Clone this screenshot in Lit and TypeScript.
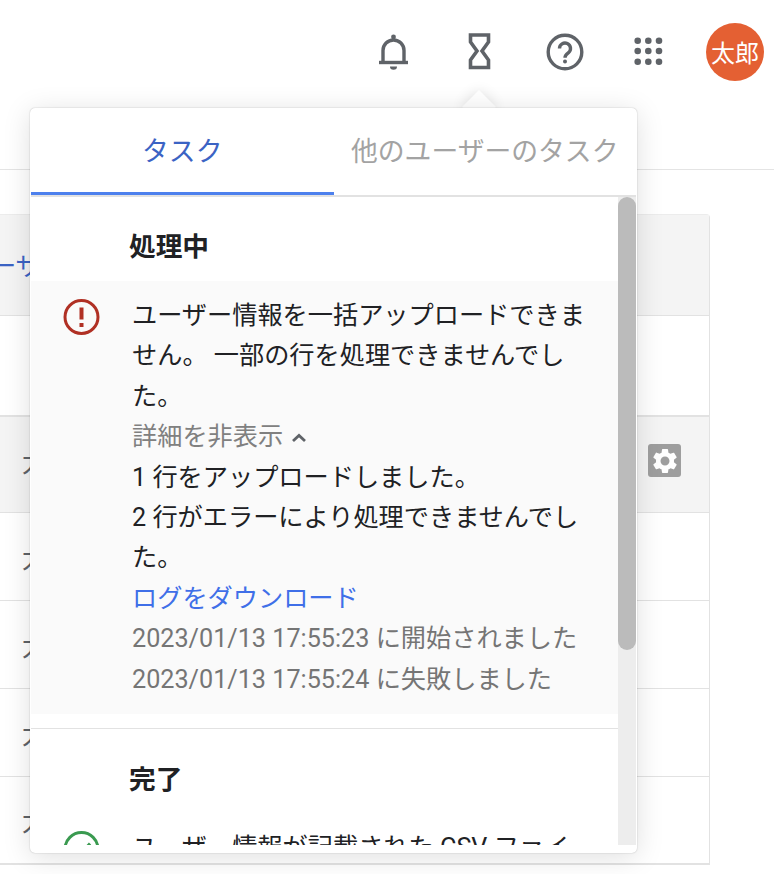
import { LitElement, html, css } from "lit";
import { customElement } from "lit/decorators.js";

const gear = "M19.14 12.94c.04-.3.06-.61.06-.94 0-.32-.02-.64-.07-.94l2.03-1.58c.18-.14.23-.41.12-.61l-1.92-3.32c-.12-.22-.37-.29-.59-.22l-2.39.96c-.5-.38-1.03-.7-1.62-.94l-.36-2.54c-.04-.24-.24-.41-.48-.41h-3.84c-.24 0-.43.17-.47.41l-.36 2.54c-.59.24-1.13.57-1.62.94l-2.39-.96c-.22-.08-.47 0-.59.22L2.74 8.87c-.12.21-.08.47.12.61l2.03 1.58c-.05.3-.09.63-.09.94s.02.64.07.94l-2.03 1.58c-.18.14-.23.41-.12.61l1.92 3.32c.12.22.37.29.59.22l2.39-.96c.5.38 1.03.7 1.62.94l.36 2.54c.05.24.24.41.48.41h3.84c.24 0 .44-.17.47-.41l.36-2.54c.59-.24 1.13-.56 1.62-.94l2.39.96c.22.08.47 0 .59-.22l1.92-3.32c.12-.22.07-.47-.12-.61l-2.01-1.58zM12 15.6c-1.98 0-3.6-1.62-3.6-3.6s1.62-3.6 3.6-3.6 3.6 1.62 3.6 3.6-1.62 3.6-3.6 3.6z";

@customElement("app-root")
export class AppRoot extends LitElement {
  static styles = css`
    :host {
      display: block;
      position: relative;
      width: 774px;
      height: 874px;
      overflow: hidden;
      background: #fff;
      font-family: Roboto, "Noto Sans CJK JP", sans-serif;
      font-size: 25.2px;
      color: #202124;
    }
    .header {
      display: flex;
      align-items: center;
      box-sizing: border-box;
      height: 170px;
      padding: 23px 10px 89px 0;
      justify-content: flex-end;
      border-bottom: 1px solid #e4e4e4;
    }
    .ico {
      width: 85px;
      display: flex;
      justify-content: center;
    }
    .ico svg { display: block; width: 44px; height: 44px; }
    .avatar {
      width: 58px;
      height: 58px;
      margin-left: 15px;
      border-radius: 50%;
      background: #e46033;
      color: #fff;
      font-size: 24px;
      display: flex;
      align-items: center;
      justify-content: center;
      white-space: nowrap;
    }
    .table {
      margin-top: 44px;
      width: 710px;
      box-sizing: border-box;
      border-right: 1px solid #e2e2e2;
      border-top: 1px solid #ececec;
      border-top-right-radius: 4px;
      color: #5f6368;
    }
    .row {
      box-sizing: border-box;
      display: flex;
      align-items: center;
      justify-content: space-between;
      padding-left: 22px;
      border-bottom: 1px solid #e2e2e2;
      height: 88px;
      white-space: nowrap;
    }
    .row.gray { background: #f4f4f4; }
    .row.head { height: 101px; padding-left: 0; color: #3b63c4; padding-bottom: 2px; }
    .row.head span { margin-left: -9px; }
    .row.blank { height: 101px; border-bottom-width: 2px; }
    .row.tall { height: 96px; padding-bottom: 8px; padding-right: 28px; }
    .row.last { border-bottom-width: 2px; }
    .gearbox {
      width: 33px;
      height: 33px;
      border-radius: 3px;
      background: #9e9e9e;
      display: flex;
      align-items: center;
      justify-content: center;
    }
    .gearbox svg { width: 30px; height: 30px; fill: #fff; }
    .arrow {
      position: absolute;
      left: 467px;
      top: 95px;
      width: 24px;
      height: 24px;
      background: #fff;
      transform: rotate(45deg);
      box-shadow: 0 0 14px rgba(0, 0, 0, 0.12);
    }
    .popup {
      position: absolute;
      left: 30px;
      top: 108px;
      width: 607px;
      height: 745px;
      box-sizing: border-box;
      background: #fff;
      border-radius: 5px;
      padding: 1px 1px 8px 1px;
      display: flex;
      flex-direction: column;
      box-shadow: 0 0 1.5px rgba(0, 0, 0, 0.28), 0 4px 28px rgba(0, 0, 0, 0.13);
    }
    .tabs {
      display: flex;
      box-sizing: border-box;
      height: 88px;
      flex: none;
      border-bottom: 2px solid #e2e2e2;
    }
    .tab {
      box-sizing: border-box;
      flex: 1;
      height: 86px;
      padding-bottom: 6px;
      font-size: 26.8px;
      display: flex;
      align-items: center;
      justify-content: center;
      color: #a3a3a3;
      white-space: nowrap;
    }
    .tab.active {
      color: #3b63c4;
      border-bottom: 3px solid #4d80ed;
      padding-bottom: 3px;
    }
    .scroll {
      flex: 1;
      min-height: 0;
      display: flex;
      overflow: hidden;
    }
    .content {
      flex: 1;
      min-width: 0;
      overflow: hidden;
    }
    .track {
      flex: none;
      width: 18px;
      background: #ededed;
    }
    .thumb {
      height: 453px;
      background: #bbbbbb;
      border-radius: 9px;
    }
    h2 {
      margin: 0;
      padding: 34px 0 17px 98px;
      font-size: 26.7px;
      line-height: 33px;
      font-weight: 700;
      color: #202124;
    }
    .sep + h2 { padding: 35px 0 16px 98px; }
    .item {
      display: flex;
      gap: 31px;
      padding: 15px 0 14px 32px;
      line-height: 40.4px;
    }
    .item.err { background: #fafafa; }
    .item svg.state { flex: none; width: 38px; height: 38px; margin-top: 2px; }
    .body { width: 456px; }
    .muted { color: #757575; }
    .link { color: #3f6fe8; }
    .toggle { display: flex; align-items: center; gap: 8px; color: #808080; }
    .toggle svg { width: 16px; height: 10px; margin-top: 2px; }
    .sep { border-top: 1px solid #e2e2e2; margin-top: 14px; }
  `;

  render() {
    return html`
      <div class="header">
        <div class="ico">
          <svg viewBox="0 0 44 44" fill="none" stroke="#5f6368" stroke-width="3.4">
            <circle cx="21.5" cy="7" r="2.4" fill="#5f6368" stroke="none"></circle>
            <path d="M11 32V20.5a10.5 10.5 0 0 1 21 0V32"></path>
            <path d="M7 32.5H36"></path>
            <path d="M18 36.5h7a3.5 3.2 0 0 1-7 0z" fill="#5f6368" stroke="none"></path>
          </svg>
        </div>
        <div class="ico">
          <svg viewBox="0 0 44 44" fill="none" stroke="#5f6368" stroke-width="3.6">
            <path d="M13.5 5H31.5V12L25 21L31.5 30V37.5H13.5V30L20 21L13.5 12Z"></path>
          </svg>
        </div>
        <div class="ico">
          <svg viewBox="0 0 44 44" fill="none" stroke="#5f6368" stroke-width="3.4">
            <circle cx="23" cy="22" r="16.8"></circle>
            <path d="M17.5 18.5a5.5 5.5 0 1 1 9 4.2c-2 1.5-3.5 2.5-3.5 5"></path>
            <circle cx="23" cy="31.5" r="2" fill="#5f6368" stroke="none"></circle>
          </svg>
        </div>
        <div class="ico">
          <svg viewBox="0 0 44 44" fill="#5f6368">
            <circle cx="10.7" cy="10.7" r="3.3"></circle>
            <circle cx="21.3" cy="10.7" r="3.3"></circle>
            <circle cx="32" cy="10.7" r="3.3"></circle>
            <circle cx="10.7" cy="21" r="3.3"></circle>
            <circle cx="21.3" cy="21" r="3.3"></circle>
            <circle cx="32" cy="21" r="3.3"></circle>
            <circle cx="10.7" cy="31.7" r="3.3"></circle>
            <circle cx="21.3" cy="31.7" r="3.3"></circle>
            <circle cx="32" cy="31.7" r="3.3"></circle>
          </svg>
        </div>
        <div class="avatar">太郎</div>
      </div>

      <div class="table">
        <div class="row head gray"><span>ーザー</span></div>
        <div class="row blank"></div>
        <div class="row tall gray">
          <span>太郎</span>
          <div class="gearbox"><svg viewBox="0 0 24 24"><path d="${gear}"></path></svg></div>
        </div>
        <div class="row"><span>太郎</span></div>
        <div class="row"><span>太郎</span></div>
        <div class="row"><span>太郎</span></div>
        <div class="row last"><span>太郎</span></div>
      </div>

      <div class="arrow"></div>
      <div class="popup">
        <div class="tabs">
          <div class="tab active">タスク</div>
          <div class="tab">他のユーザーのタスク</div>
        </div>
        <div class="scroll">
          <div class="content">
            <h2>処理中</h2>
            <div class="item err">
              <svg class="state" viewBox="0 0 38 38" fill="none" stroke="#b03024" stroke-width="3">
                <circle cx="18.5" cy="19" r="16.5"></circle>
                <path d="M18.5 9.5V21.5" stroke-width="4"></path>
                <path d="M18.5 25V29" stroke-width="4"></path>
              </svg>
              <div class="body">
                <div>ユーザー情報を一括アップロードできません。 一部の行を処理できませんでした。</div>
                <div class="toggle">
                  <span>詳細を非表示</span>
                  <svg viewBox="0 0 16 10" fill="none" stroke="#5f6368" stroke-width="2.8"><path d="M2 8L8 2.5L14 8"></path></svg>
                </div>
                <div>1 行をアップロードしました。</div>
                <div>2 行がエラーにより処理できませんでした。</div>
                <div class="link">ログをダウンロード</div>
                <div class="muted">2023/01/13 17:55:23 に開始されました</div>
                <div class="muted">2023/01/13 17:55:24 に失敗しました</div>
              </div>
            </div>
            <div class="sep"></div>
            <h2>完了</h2>
            <div class="item">
              <svg class="state" viewBox="0 0 38 38" fill="none" stroke="#3a9a50" stroke-width="3">
                <circle cx="18.5" cy="19" r="16.5"></circle>
                <path d="M11 19.5L16.5 25L27 13.5"></path>
              </svg>
              <div class="body">
                <div>ユーザー情報が記載された CSV ファイルをダウンロードできます。</div>
              </div>
            </div>
          </div>
          <div class="track"><div class="thumb"></div></div>
        </div>
      </div>
    `;
  }
}
